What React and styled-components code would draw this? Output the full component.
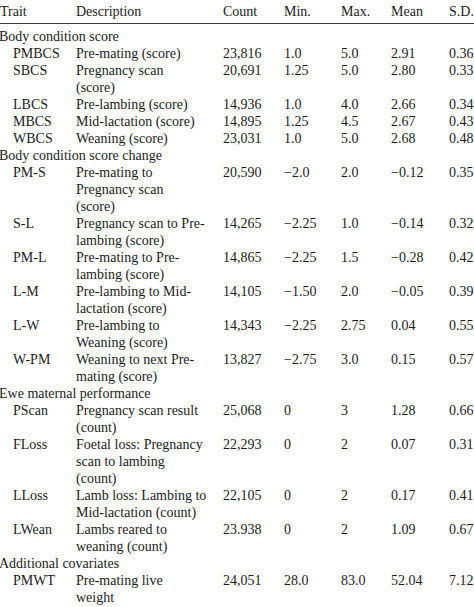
import React from 'react';
import styled, { createGlobalStyle } from 'styled-components';

const GlobalStyle = createGlobalStyle`
  html, body {
    margin: 0;
    padding: 0;
    background: #fff;
    overflow: hidden;
  }
`;

const Table = styled.div`
  width: 520px;
  padding-top: 3px;
  font-family: 'Liberation Serif', 'Times New Roman', serif;
  font-size: 14px;
  line-height: 17px;
  color: #1c1c1c;
`;

const Row = styled.div`
  display: grid;
  grid-template-columns: 76px 147px 61px 57px 50px 58px 70px;
  white-space: nowrap;
`;

const HeadRow = styled(Row)`
  padding-bottom: 3px;
  border-bottom: 1px solid #3a3a3a;
  margin-bottom: 4px;
`;

const Cell = styled.div`
  padding-left: ${(p) => (p.$indent ? '13px' : '0')};
`;

const Section = styled.div`
  white-space: nowrap;
  margin-left: -1px;
`;

const Lines = styled.div`
  display: flex;
  flex-direction: column;
`;

const groups = [
  {
    title: 'Body condition score',
    rows: [
      ['PMBCS', ['Pre-mating (score)'], '23,816', '1.0', '5.0', '2.91', '0.36'],
      ['SBCS', ['Pregnancy scan', '(score)'], '20,691', '1.25', '5.0', '2.80', '0.33'],
      ['LBCS', ['Pre-lambing (score)'], '14,936', '1.0', '4.0', '2.66', '0.34'],
      ['MBCS', ['Mid-lactation (score)'], '14,895', '1.25', '4.5', '2.67', '0.43'],
      ['WBCS', ['Weaning (score)'], '23,031', '1.0', '5.0', '2.68', '0.48'],
    ],
  },
  {
    title: 'Body condition score change',
    rows: [
      ['PM-S', ['Pre-mating to', 'Pregnancy scan', '(score)'], '20,590', '\u22122.0', '2.0', '\u22120.12', '0.35'],
      ['S-L', ['Pregnancy scan to Pre-', 'lambing (score)'], '14,265', '\u22122.25', '1.0', '\u22120.14', '0.32'],
      ['PM-L', ['Pre-mating to Pre-', 'lambing (score)'], '14,865', '\u22122.25', '1.5', '\u22120.28', '0.42'],
      ['L-M', ['Pre-lambing to Mid-', 'lactation (score)'], '14,105', '\u22121.50', '2.0', '\u22120.05', '0.39'],
      ['L-W', ['Pre-lambing to', 'Weaning (score)'], '14,343', '\u22122.25', '2.75', '0.04', '0.55'],
      ['W-PM', ['Weaning to next Pre-', 'mating (score)'], '13,827', '\u22122.75', '3.0', '0.15', '0.57'],
    ],
  },
  {
    title: 'Ewe maternal performance',
    rows: [
      ['PScan', ['Pregnancy scan result', '(count)'], '25,068', '0', '3', '1.28', '0.66'],
      ['FLoss', ['Foetal loss: Pregnancy', 'scan to lambing', '(count)'], '22,293', '0', '2', '0.07', '0.31'],
      ['LLoss', ['Lamb loss: Lambing to', 'Mid-lactation (count)'], '22,105', '0', '2', '0.17', '0.41'],
      ['LWean', ['Lambs reared to', 'weaning (count)'], '23.938', '0', '2', '1.09', '0.67'],
    ],
  },
  {
    title: 'Additional covariates',
    rows: [
      ['PMWT', ['Pre-mating live', 'weight'], '24,051', '28.0', '83.0', '52.04', '7.12'],
    ],
  },
];

const App = () => (
  <>
    <GlobalStyle />
    <Table>
      <HeadRow>
        <Cell>Trait</Cell>
        <Cell>Description</Cell>
        <Cell>Count</Cell>
        <Cell>Min.</Cell>
        <Cell>Max.</Cell>
        <Cell>Mean</Cell>
        <Cell>S.D.</Cell>
      </HeadRow>
      {groups.map((g) => (
        <React.Fragment key={g.title}>
          <Section>{g.title}</Section>
          {g.rows.map(([code, desc, ...nums]) => (
            <Row key={code}>
              <Cell $indent>{code}</Cell>
              <Lines>
                {desc.map((line) => (
                  <span key={line}>{line}</span>
                ))}
              </Lines>
              {nums.map((n, i) => (
                <Cell key={i}>{n}</Cell>
              ))}
            </Row>
          ))}
        </React.Fragment>
      ))}
    </Table>
  </>
);

export default App;
